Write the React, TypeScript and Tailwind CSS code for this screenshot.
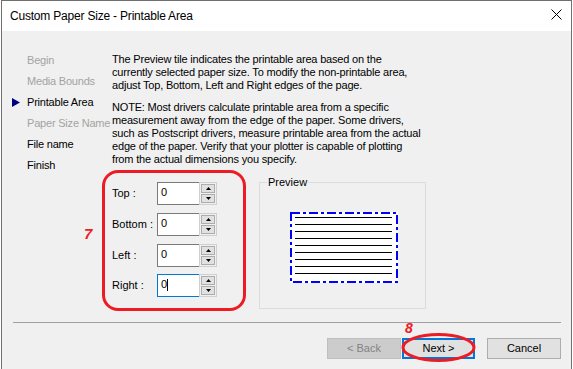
import React from "react";

const Tri = ({ up }: { up?: boolean }) => (
  <svg width="5" height="3" viewBox="0 0 5 3" className="block">
    <polygon points={up ? "2.5,0 5,3 0,3" : "0,0 5,0 2.5,3"} fill="#000" />
  </svg>
);

function Spinner() {
  return (
    <div className="w-[18px] h-[23px] border border-[#d0d0d0] bg-[#f0f0f0] p-[1px] flex flex-col gap-[1px]">
      <div className="flex-1 border border-[#adadad] bg-[#e1e1e1] flex items-center justify-center">
        <Tri up />
      </div>
      <div className="flex-1 border border-[#adadad] bg-[#e1e1e1] flex items-center justify-center">
        <Tri />
      </div>
    </div>
  );
}

function Field({
  label,
  focused,
  className,
}: {
  label: string;
  focused?: boolean;
  className?: string;
}) {
  return (
    <div className={"flex items-center " + (className ?? "")}>
      <div className="w-[45px] text-[11px] leading-[13px] text-black whitespace-nowrap">{label}</div>
      <div
        className={
          "w-[42px] h-[23px] bg-white pl-[3px] text-[11px] leading-[18px] text-black " +
          (focused ? "border border-r-0 border-[#0078d7]" : "border border-r-0 border-[#7a7a7a]")
        }
      >
        0
        {focused && <span className="inline-block w-[1px] h-[12px] bg-black align-[-3px]" />}
      </div>
      <Spinner />
    </div>
  );
}

function NavItem({ text, state }: { text: string; state: "dis" | "cur" | "en" }) {
  return (
    <div className="flex items-center h-[21px] leading-[21px]">
      <div className="w-[15px] flex items-center">
        {state === "cur" && (
          <svg width="8" height="9" viewBox="0 0 8 9" className="block">
            <polygon points="0,0 8,4.5 0,9" fill="#000080" />
          </svg>
        )}
      </div>
      <span className={state === "dis" ? "text-[#a3a3a3]" : "text-black"}>{text}</span>
    </div>
  );
}

export default function App() {
  return (
    <div className="w-[573px] h-[369px] overflow-hidden bg-white pl-[1px] font-['Liberation_Sans',Arial,sans-serif]">
      <div className="w-[571px] h-[369px] border-t border-x border-[#707070] bg-[#f0f0f0] flex flex-col">
        {/* Title bar */}
        <div className="h-[30px] bg-white flex items-center justify-between pl-[8px] pr-[9px] shrink-0">
          <span className="text-[12px] text-black tracking-[-0.2px]">Custom Paper Size - Printable Area</span>
          <svg width="11" height="11" viewBox="0 0 11 11" className="block mb-[3px]">
            <path d="M0.5 0.5 L10.5 10.5 M10.5 0.5 L0.5 10.5" stroke="#000" strokeWidth="1" />
          </svg>
        </div>

        {/* Top section */}
        <div className="h-[139px] flex items-start shrink-0 text-[11px]">
          <div className="w-[110px] pl-[10px] pt-[19px] whitespace-nowrap tracking-[-0.2px]">
            <NavItem text="Begin" state="dis" />
            <NavItem text="Media Bounds" state="dis" />
            <NavItem text="Printable Area" state="cur" />
            <NavItem text="Paper Size Name" state="dis" />
            <NavItem text="File name" state="en" />
            <NavItem text="Finish" state="en" />
          </div>
          <div className="pt-[22px] leading-[13px] text-black whitespace-nowrap tracking-[-0.18px]">
            <p>
              The Preview tile indicates the printable area based on the
              <br />
              currently selected paper size. To modify the non-printable area,
              <br />
              adjust Top, Bottom, Left and Right edges of the page.
            </p>
            <p className="mt-[9px]">
              NOTE: Most drivers calculate printable area from a specific
              <br />
              measurement away from the edge of the paper. Some drivers,
              <br />
              such as Postscript drivers, measure printable area from the actual
              <br />
              edge of the paper. Verify that your plotter is capable of plotting
              <br />
              from the actual dimensions you specify.
            </p>
          </div>
        </div>

        {/* Lower section */}
        <div className="flex items-start pl-[82px] shrink-0">
          <div className="w-[18px] mt-[56px] text-[15px] leading-[15px] font-bold italic text-[#ed1c24]">7</div>
          <div className="w-[144px] h-[141px] border-[3px] border-[#ed1c24] rounded-[16px] pt-[9px] pl-[7px]">
            <Field label="Top :" />
            <Field label="Bottom :" className="mt-[8px]" />
            <Field label="Left :" className="mt-[8px]" />
            <Field label="Right :" focused className="mt-[7px]" />
          </div>
          <fieldset className="ml-[13px] mt-[6px] w-[167px] h-[133px] border border-[#dcdcdc]">
            <legend className="ml-[7px] px-[1px] text-[11px] leading-[12px] text-black">Preview</legend>
            <div className="pl-[30px] pt-[24px]">
              <svg width="108" height="71" viewBox="0 0 108 71" className="block">
                <rect x="0" y="0" width="108" height="71" fill="#fff" />
                <rect
                  x="1"
                  y="1"
                  width="106"
                  height="69"
                  fill="none"
                  stroke="#0000ff"
                  strokeWidth="2"
                  strokeDasharray="9 3 3 3"
                />
                {Array.from({ length: 9 }).map((_, i) => (
                  <rect key={i} x="5" y={5 + i * 7} width="97" height="1" fill="#000" />
                ))}
              </svg>
            </div>
          </fieldset>
        </div>

        {/* Separator */}
        <div className="mt-[11px] ml-[11px] mr-[10px] border-t border-[#a0a0a0] shrink-0" />

        {/* Buttons */}
        <div className="mt-[15px] flex justify-end pr-[10px] text-[11px] shrink-0">
          <div className="w-[74px] h-[21px] border border-[#bfbfbf] bg-[#cccccc] text-[#838383] flex items-center justify-center">
            &lt; Back
          </div>
          <div className="relative ml-[1px] w-[73px] h-[21px]">
            <div className="w-full h-full border-2 border-[#0078d7] bg-[#e1e1e1] text-black flex items-center justify-center">
              Next &gt;
            </div>
            <svg
              width="76"
              height="30"
              viewBox="0 0 76 30"
              className="absolute left-[-1px] top-[-5px] pointer-events-none"
            >
              <ellipse cx="37.5" cy="14.5" rx="35.5" ry="13" fill="none" stroke="#ed1c24" strokeWidth="3" />
            </svg>
            <span className="absolute left-[3px] top-[-17px] text-[14px] leading-[14px] font-bold italic text-[#ed1c24]">
              8
            </span>
          </div>
          <div className="ml-[12px] w-[74px] h-[21px] border border-[#adadad] bg-[#e1e1e1] text-black flex items-center justify-center">
            Cancel
          </div>
        </div>
      </div>
    </div>
  );
}
